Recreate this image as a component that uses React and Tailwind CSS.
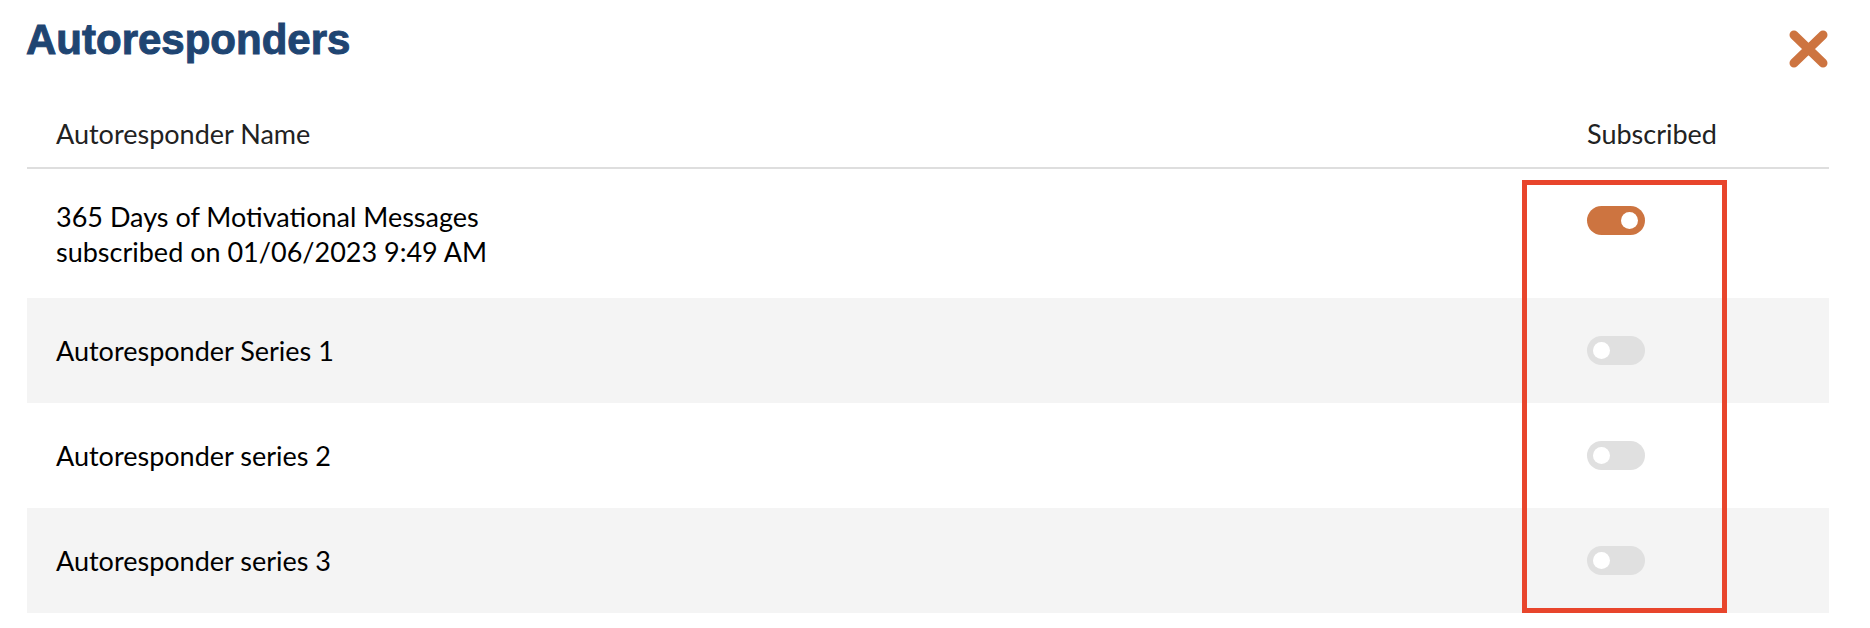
import { useState } from 'react';

const ROWS = [
  { id: 1, name: '365 Days of Motivational Messages', since: 'subscribed on 01/06/2023 9:49 AM', on: true },
  { id: 2, name: 'Autoresponder Series 1', on: false },
  { id: 3, name: 'Autoresponder series 2', on: false },
  { id: 4, name: 'Autoresponder series 3', on: false },
];

function Toggle({ on, onChange }) {
  return (
    <button
      onClick={onChange}
      className={`relative flex items-center w-[58px] h-[29px] rounded-full ${
        on ? 'bg-[#cd7440] justify-end pr-[7px]' : 'bg-[#e0e0e0] justify-start pl-[6px]'
      }`}
    >
      <span className="block w-[17px] h-[17px] rounded-full bg-white" />
    </button>
  );
}

export default function App() {
  const [rows, setRows] = useState(ROWS);

  const flip = (id) => {
    setRows(prev => prev.map(r => (r.id === id ? { ...r, on: !r.on } : r)));
  };

  return (
    <div className="relative w-full h-[628px] bg-white pl-[27px] pr-[41px] font-['Lato',sans-serif] text-[27px] leading-[35px] text-black">
      {/* Title bar */}
      <div className="flex items-start justify-between h-[68px]">
        <h1 className="mt-[16px] -ml-[1px] font-['Liberation_Sans',Arial,sans-serif] font-bold text-[42px] leading-[48px] text-[#1f4572] [-webkit-text-stroke:1px_#1f4572]">
          Autoresponders
        </h1>
        <button className="mt-[30px] w-[41px] h-[38px]">
          <svg viewBox="0 0 41 38" className="w-[41px] h-[38px]">
            <path d="M6 5 L35 33 M35 5 L6 33" stroke="#cd7440" strokeWidth="9" strokeLinecap="round" fill="none" />
          </svg>
        </button>
      </div>

      {/* Table */}
      <div className="grid grid-cols-[1fr_242px]">
        <div className="pl-[29px] pt-[48px] pb-[15px] leading-[36px] text-[#222] border-b-2 border-[#dedede]">
          Autoresponder Name
        </div>
        <div className="pt-[48px] pb-[15px] leading-[36px] text-[#222] border-b-2 border-[#dedede]">
          Subscribed
        </div>

        {rows.map((r, i) => {
          const bg = i % 2 === 1 ? 'bg-[#f4f4f4]' : 'bg-white';
          if (r.since) {
            return [
              <div key={`${r.id}-a`} className={`pl-[29px] pt-[30px] pb-[29px] ${bg}`}>
                <div>{r.name}</div>
                <div>{r.since}</div>
              </div>,
              <div key={`${r.id}-b`} className={`pt-[37px] ${bg}`}>
                <Toggle on={r.on} onChange={() => flip(r.id)} />
              </div>,
            ];
          }
          return [
            <div key={`${r.id}-a`} className={`pl-[29px] h-[105px] flex items-center ${bg}`}>
              {r.name}
            </div>,
            <div key={`${r.id}-b`} className={`h-[105px] flex items-center ${bg}`}>
              <Toggle on={r.on} onChange={() => flip(r.id)} />
            </div>,
          ];
        })}
      </div>

      {/* Highlight annotation */}
      <div className="absolute left-[1522px] top-[180px] w-[205px] h-[433px] border-[5px] border-[#e8452c] pointer-events-none" />
    </div>
  );
}
